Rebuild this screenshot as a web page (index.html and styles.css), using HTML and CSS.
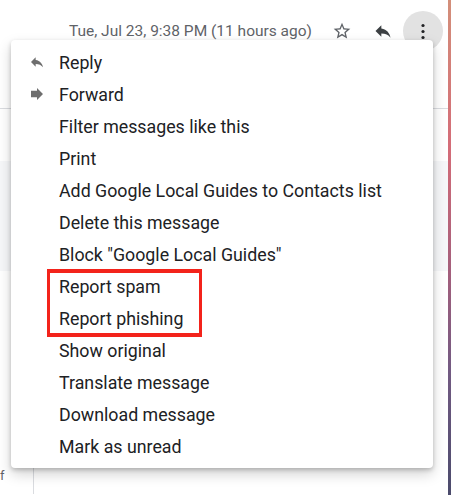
FILE: index.html
```html
<html>
<head>
    <title>Message actions</title>
    <link rel="stylesheet" href="styles.css">
</head>
<body>
    <div class="page">
        <div class="main">
            <div class="toolbar">
                <span class="date">Tue, Jul 23, 9:38 PM (11 hours ago)</span>
                <svg class="star" viewBox="0 0 24 24"><path d="M22 9.24l-7.19-.62L12 2 9.19 8.63 2 9.24l5.46 4.73L5.82 21 12 17.27 18.18 21l-1.63-7.03L22 9.24zM12 15.4l-3.76 2.27 1-4.28-3.32-2.88 4.38-.38L12 6.1l1.71 4.04 4.38.38-3.32 2.88 1 4.28L12 15.4z"/></svg>
                <svg class="reply" viewBox="0 0 24 24"><path d="M10 9V5l-7 7 7 7v-4.1c5 0 8.5 1.6 11 5.1-1-5-4-10-11-11z"/></svg>
                <div class="more">
                    <svg viewBox="0 0 40 40"><circle cx="20" cy="14.5" r="1.6"/><circle cx="20" cy="20.5" r="1.6"/><circle cx="20" cy="26.5" r="1.6"/></svg>
                </div>
            </div>
            <div class="thread">
                <div class="divider"></div>
                <div class="band"></div>
                <div class="bottom">
                    <span class="cut">f</span>
                    <div class="vline"></div>
                </div>
            </div>

            <div class="menu">
                <div class="item">
                    <svg class="icon" viewBox="0 0 24 24"><path d="M10 9V5l-7 7 7 7v-4.1c5 0 8.5 1.6 11 5.1-1-5-4-10-11-11z"/></svg>
                    <span>Reply</span>
                </div>
                <div class="item">
                    <svg class="icon" viewBox="0 0 24 24"><path d="M12 7V3l9 9-9 9v-4H3V7z"/></svg>
                    <span>Forward</span>
                </div>
                <div class="item"><span class="icon"></span><span>Filter messages like this</span></div>
                <div class="item"><span class="icon"></span><span>Print</span></div>
                <div class="item"><span class="icon"></span><span>Add Google Local Guides to Contacts list</span></div>
                <div class="item"><span class="icon"></span><span>Delete this message</span></div>
                <div class="item"><span class="icon"></span><span>Block "Google Local Guides"</span></div>
                <div class="highlight">
                    <div class="item"><span class="icon"></span><span>Report spam</span></div>
                    <div class="item"><span class="icon"></span><span>Report phishing</span></div>
                </div>
                <div class="item"><span class="icon"></span><span>Show original</span></div>
                <div class="item"><span class="icon"></span><span>Translate message</span></div>
                <div class="item"><span class="icon"></span><span>Download message</span></div>
                <div class="item"><span class="icon"></span><span>Mark as unread</span></div>
            </div>
        </div>
        <div class="desktop"></div>
    </div>
</body>
</html>
```

FILE: styles.css
```css
body { margin: 0; font-family: Roboto, "Liberation Sans", Arial, sans-serif; background-color: #fff; }
.page { display: flex; width: 451px; height: 495px; overflow: hidden; }
.main { position: relative; width: 448px; height: 495px; }
.desktop { width: 3px; height: 495px; background: linear-gradient(to bottom, #d38f7a 0%, #d46c78 30%, #a45f7c 55%, #725a82 75%, #4b4b6c 100%); }

.toolbar { display: flex; align-items: center; justify-content: flex-end; padding-top: 11px; padding-right: 5px; height: 40px; }
.date { font-size: 15.5px; color: #5f6368; margin-right: 20px; }
.star { width: 20px; height: 20px; fill: #5f6368; margin-right: 21px; }
.reply { width: 20px; height: 20px; fill: #3c4043; margin-right: 10px; }
.more { width: 40px; height: 40px; border-radius: 50%; background-color: #e2e2e2; }
.more svg { width: 40px; height: 40px; fill: #202124; display: block; }

.thread { display: flex; flex-direction: column; }
.divider { height: 57px; border-bottom: 1px solid #dadce0; }
.band { margin-top: 52px; height: 110px; background-color: #f6f7f9; }
.bottom { display: flex; margin-top: 196px; height: 27px; }
.cut { font-size: 13px; color: #5f6368; width: 33px; line-height: 18px; }
.vline { width: 1px; background-color: #dadce0; }

.menu { position: absolute; left: 11px; top: 40px; width: 422px; padding: 6px 0; background-color: #fff; border-radius: 4px; box-shadow: 0 2px 4px rgba(0,0,0,0.2), 0 6px 14px rgba(0,0,0,0.18); }
.item { display: flex; align-items: center; height: 32px; padding-left: 18px; font-size: 17.8px; color: #202124; }
.icon { width: 16px; height: 16px; margin-right: 14px; fill: #6e6e6e; flex-shrink: 0; }
.highlight { position: relative; }
.highlight::after { content: ""; position: absolute; left: 36px; top: -1px; width: 149px; height: 60px; border: 4px solid #f3231b; border-left-width: 3px; border-right-width: 3px; }
```
